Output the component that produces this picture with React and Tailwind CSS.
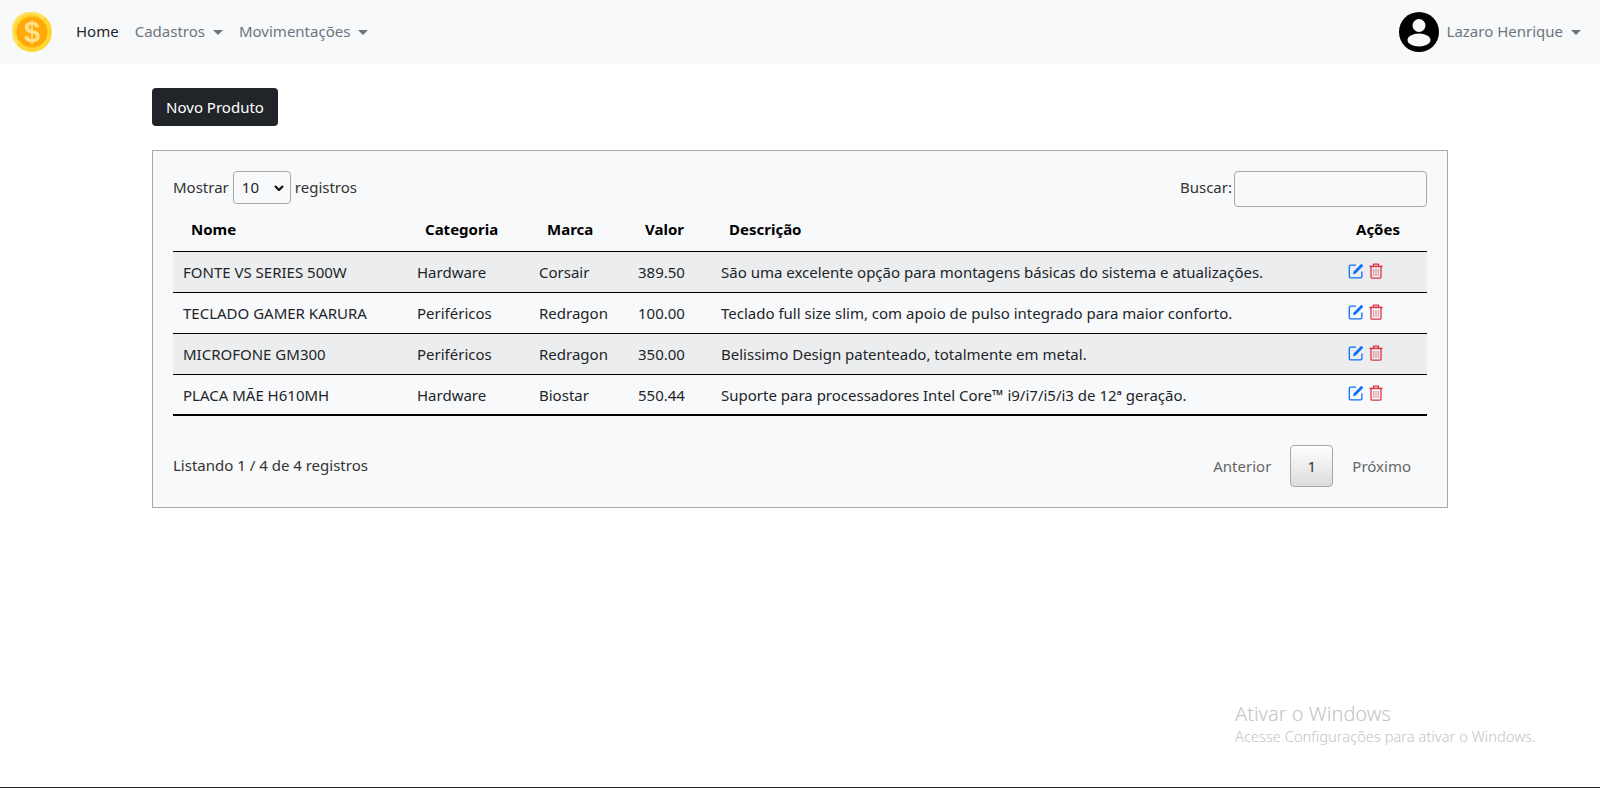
const produtos = [
  { nome: 'FONTE VS SERIES 500W', categoria: 'Hardware', marca: 'Corsair', valor: '389.50', descricao: 'São uma excelente opção para montagens básicas do sistema e atualizações.' },
  { nome: 'TECLADO GAMER KARURA', categoria: 'Periféricos', marca: 'Redragon', valor: '100.00', descricao: 'Teclado full size slim, com apoio de pulso integrado para maior conforto.' },
  { nome: 'MICROFONE GM300', categoria: 'Periféricos', marca: 'Redragon', valor: '350.00', descricao: 'Belissimo Design patenteado, totalmente em metal.' },
  { nome: 'PLACA MÃE H610MH', categoria: 'Hardware', marca: 'Biostar', valor: '550.44', descricao: 'Suporte para processadores Intel Core™ i9/i7/i5/i3 de 12ª geração.' },
];

function Caret() {
  return <span className="ml-2 inline-block h-0 w-0 border-x-[5px] border-t-[5px] border-x-transparent border-t-current align-middle"></span>;
}

function CoinLogo() {
  return (
    <svg viewBox="0 0 40 40" className="h-10 w-10">
      <circle cx="20" cy="20" r="20" fill="#fdd835" />
      <path d="M6 32A18 18 0 0 1 32 6" stroke="#ffe26a" strokeWidth="2.5" fill="none" />
      <circle cx="20" cy="20" r="15.5" fill="#ffa90a" />
      <text x="20" y="30" textAnchor="middle" fontSize="29" fontWeight="700" fill="#ffe08a" fontFamily="Liberation Sans, sans-serif">$</text>
    </svg>
  );
}

function UserIcon() {
  return (
    <svg viewBox="0 0 40 40" className="h-10 w-10">
      <circle cx="20" cy="20" r="20" fill="#000" />
      <circle cx="20" cy="13.5" r="6.5" fill="#f8f9fa" />
      <ellipse cx="20" cy="28" rx="11.5" ry="6.5" fill="#f8f9fa" />
    </svg>
  );
}

function EditIcon() {
  return (
    <svg viewBox="0 0 16 16" className="h-4 w-4" fill="none">
      <path d="M8 2.2H2.6A1.3 1.3 0 0 0 1.3 3.5v10a1.3 1.3 0 0 0 1.3 1.3h10a1.3 1.3 0 0 0 1.3-1.3V8.5" stroke="#0d6efd" strokeWidth="1.3" />
      <path d="M13.3.8l2 2-7.6 7.6-2.8.8.8-2.8z" fill="#0d6efd" />
    </svg>
  );
}

function TrashIcon() {
  return (
    <svg viewBox="0 0 16 16" className="h-4 w-4" fill="none">
      <path d="M1.5 3.4h13" stroke="#dc3545" strokeWidth="1.6" />
      <path d="M5.5 3V1.2h5V3" stroke="#dc3545" strokeWidth="1.3" />
      <path d="M3 4v10a1.2 1.2 0 0 0 1.2 1.2h7.6A1.2 1.2 0 0 0 13 14V4" stroke="#dc3545" strokeWidth="1.3" />
      <path d="M5.7 6v7M8 6v7M10.3 6v7" stroke="#e98b95" strokeWidth="1.1" />
    </svg>
  );
}

export default function App() {
  return (
    <div className="relative flex min-h-screen flex-col bg-white text-[15px] text-[#212529] font-['Noto_Sans',sans-serif]">
      {/* navbar */}
      <nav className="flex h-16 items-center justify-between bg-[#f8f9fa] pl-3 pr-[19px]">
        <div className="flex items-center">
          <CoinLogo />
          <a className="mb-0.5 ml-6 text-[#212529]">Home</a>
          <a className="mb-0.5 ml-4 text-[#6c757d]">Cadastros<Caret /></a>
          <a className="mb-0.5 ml-4 text-[#6c757d]">Movimentações<Caret /></a>
        </div>
        <div className="flex items-center text-[#6c757d]">
          <UserIcon />
          <span className="mb-0.5 ml-2">Lazaro Henrique<Caret /></span>
        </div>
      </nav>

      <main className="flex-1 px-[152px] pt-6">
        <button className="h-[38px] w-[126px] rounded bg-[#212529] text-white">Novo Produto</button>

        <section className="mt-6 h-[358px] border border-[#a9a9a9] bg-[#f8f9fa] px-5 pt-5 text-[#333]">
          <div className="flex h-[33px] items-center justify-between">
            <div className="flex items-center gap-1">
              <span>Mostrar</span>
              <div className="flex h-[33px] w-[58px] items-center justify-between rounded border border-[#a9a9a9] pl-2 pr-1.5 text-[#212529]">
                <span>10</span>
                <svg viewBox="0 0 10 6" className="h-1.5 w-2.5" fill="none"><path d="M1 1l4 4 4-4" stroke="#111" strokeWidth="2.2" /></svg>
              </div>
              <span>registros</span>
            </div>
            <div className="flex items-center">
              <span>Buscar:</span>
              <div className="ml-0.5 mt-[3px] h-9 w-[193px] rounded border border-[#a9a9a9]"></div>
            </div>
          </div>

          <table className="mt-[5px] w-full table-fixed border-collapse">
            <thead>
              <tr className="h-[42px] border-b border-black text-left font-bold text-black">
                <th className="w-[234px] pb-0.5 pl-[18px]">Nome</th>
                <th className="w-[122px] pb-0.5 pl-[18px]">Categoria</th>
                <th className="w-[99px] pb-0.5 pl-[18px]">Marca</th>
                <th className="w-[83px] pb-0.5 pl-[17px]">Valor</th>
                <th className="w-[627px] pb-0.5 pl-[18px]">Descrição</th>
                <th className="pb-0.5 pl-[18px]">Ações</th>
              </tr>
            </thead>
            <tbody className="text-[#212529]">
              {produtos.map((p, i) => (
                <tr key={p.nome} className={`h-[41px] border-b ${i === 3 ? 'border-b-2' : ''} border-black ${i % 2 === 0 ? 'bg-[#ecedee]' : ''}`}>
                  <td className="pl-2.5 pt-0.5">{p.nome}</td>
                  <td className="pl-2.5 pt-0.5">{p.categoria}</td>
                  <td className="pl-2.5 pt-0.5">{p.marca}</td>
                  <td className="pl-2.5 pt-0.5">{p.valor}</td>
                  <td className="pl-2.5 pt-0.5">{p.descricao}</td>
                  <td className="pl-2.5">
                    <div className="mb-0.5 flex gap-1"><EditIcon /><TrashIcon /></div>
                  </td>
                </tr>
              ))}
            </tbody>
          </table>

          <div className="mt-[29px] flex items-center justify-between">
            <span className="mb-0.5">Listando 1 / 4 de 4 registros</span>
            <div className="flex items-center text-[#666]">
              <span className="pl-4 pr-[19px]">Anterior</span>
              <span className="flex h-[42px] w-[43px] items-center justify-center rounded-sm border border-[#a9a9a9] bg-gradient-to-b from-white to-[#dcdcdc] text-[#333]">1</span>
              <span className="pl-[19px] pr-4">Próximo</span>
            </div>
          </div>
        </section>
      </main>

      <div className="h-px bg-[#212529]"></div>

      {/* marca d'agua do Windows */}
      <div className="absolute left-[1235px] top-[702px] font-light text-[#c4c4c4]">
        <div className="text-xl leading-6">Ativar o Windows</div>
        <div className="text-[14.7px] leading-5">Acesse Configurações para ativar o Windows.</div>
      </div>
    </div>
  );
}
